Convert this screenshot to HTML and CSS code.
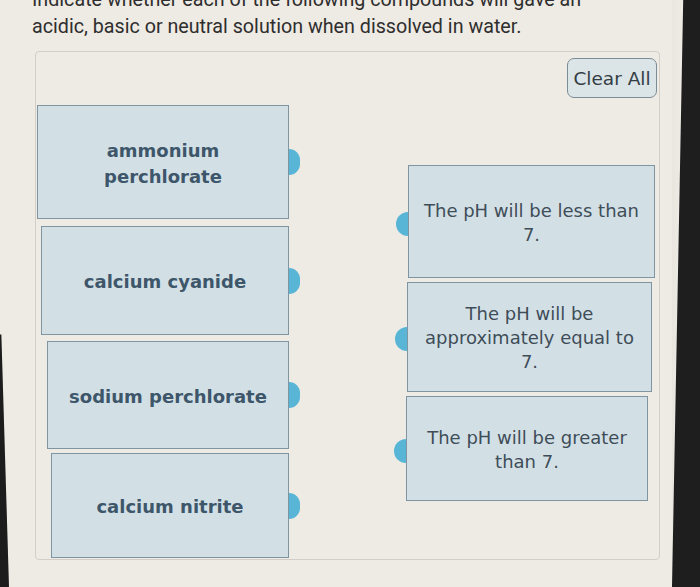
FILE: index.html
```html
<!DOCTYPE html>
<html lang="en">
<head>
<meta charset="utf-8">
<title>Acidic, basic or neutral</title>
<link rel="stylesheet" href="styles.css">
</head>
<body>
  <div class="edge-left"></div>
  <main class="page">
    <p class="prompt">Indicate whether each of the following compounds will gave an<br>acidic, basic or neutral solution when dissolved in water.</p>
    <section class="panel">
      <div class="toolbar">
        <button class="clear-btn" type="button">Clear All</button>
      </div>
      <div class="board">
        <div class="col col-items">
          <div class="item item-1"><span>ammonium<br>perchlorate</span></div>
          <div class="item item-2"><span>calcium cyanide</span></div>
          <div class="item item-3"><span>sodium perchlorate</span></div>
          <div class="item item-4"><span>calcium nitrite</span></div>
        </div>
        <div class="col col-targets">
          <div class="target target-1"><span>The pH will be less than<br>7.</span></div>
          <div class="target target-2"><span>The pH will be<br>approximately equal to<br>7.</span></div>
          <div class="target target-3"><span>The pH will be greater<br>than 7.</span></div>
        </div>
      </div>
    </section>
  </main>
  <div class="edge-right"><div class="bezel"></div></div>
</body>
</html>
```
FILE: styles.css
```css
html, body {
  margin: 0;
  height: 587px;
  overflow: hidden;
}

body {
  display: flex;
  background: #eeeae4;
  font-family: "DejaVu Sans", Verdana, sans-serif;
}

/* dark frame strip on the left, widening toward the bottom */
.edge-left {
  width: 9px;
  flex: none;
  background: #1c1c1c;
  clip-path: polygon(0 57%, 15% 57%, 100% 100%, 0 100%);
}

.page {
  flex: 1;
  padding-left: 23px;
}

.prompt {
  margin: -14px 0 0 0;
  font-family: "Liberation Sans Narrow", "Roboto", "Liberation Sans", sans-serif;
  font-size: 19.7px;
  line-height: 27px;
  color: #2e2e2e;
  white-space: nowrap;
}

.panel {
  margin: 11px 0 0 3px;
  width: 625px;
  height: 509px;
  border: 1px solid #d3cfc8;
  border-radius: 4px;
  background: #eeebe5;
  padding: 6px 0 0 0;
  box-sizing: border-box;
}

.toolbar {
  display: flex;
  justify-content: flex-end;
  padding-right: 2px;
}

.clear-btn {
  width: 90px;
  height: 40px;
  border: 1px solid #7b8c97;
  border-radius: 7px;
  background: #dbe4e7;
  font-family: "DejaVu Sans", Verdana, sans-serif;
  font-size: 18.5px;
  color: #343d44;
  padding: 0;
}

.board {
  display: flex;
  justify-content: space-between;
  margin-top: 7px;
  padding: 0 4px 0 1px;
}

.col {
  display: flex;
  flex-direction: column;
}

.col-items {
  width: 252px;
}

.col-targets {
  width: 247px;
  margin-top: 60px;
  gap: 4px;
}

.item, .target {
  position: relative;
  display: flex;
  align-items: center;
  justify-content: center;
  text-align: center;
  box-sizing: border-box;
  background: #d2e0e6;
  border: 1px solid #7f95a2;
}

.item {
  font-weight: bold;
  font-size: 18px;
  line-height: 26px;
  color: #3e566a;
}

.item-1 { height: 114px; margin-left: 0; }
.item-2 { height: 109px; margin-top: 7px; margin-left: 4px; }
.item-3 { height: 108px; margin-top: 6px; margin-left: 10px; }
.item-4 { height: 105px; margin-top: 4px; margin-left: 14px; }

.item span { margin-top: 3px; }

/* connector knob on the right of each compound */
.item::after {
  content: "";
  position: absolute;
  right: -12px;
  top: 50%;
  width: 11px;
  height: 26px;
  margin-top: -13px;
  background: #58b5d5;
  border-radius: 0 13px 13px 0 / 0 13px 13px 0;
}

.target {
  font-size: 18px;
  line-height: 24px;
  color: #3f4d58;
}

.target span { margin-top: 2px; }

.target-1 { height: 113px; margin-left: 0; }
.target-2 { height: 110px; margin-left: -1px; margin-right: 3px; }
.target-3 { height: 105px; margin-left: -2px; margin-right: 7px; }

/* connector knob on the left of each answer */
.target::before {
  content: "";
  position: absolute;
  left: -13px;
  top: 50%;
  width: 12px;
  height: 24px;
  margin-top: -10px;
  background: #58b5d5;
  border-radius: 12px 0 0 12px / 12px 0 0 12px;
}

/* light gap and dark monitor bezel on the right */
.edge-right {
  width: 28px;
  flex: none;
  position: relative;
  background: linear-gradient(to right, #e9e5df 0, #f2efea 60%);
}

.bezel {
  position: absolute;
  inset: 0;
  background: #1e1e1f;
  clip-path: polygon(40% 0, 100% 0, 100% 100%, 0 100%);
}
```
